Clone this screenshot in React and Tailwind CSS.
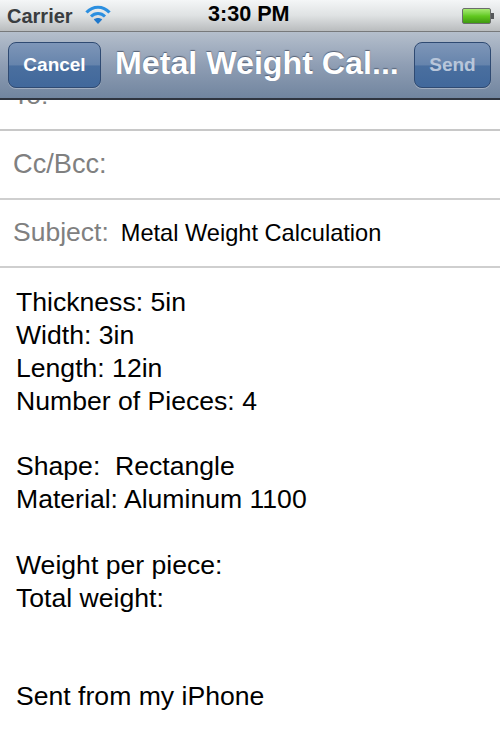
export default function App() {
  const lines1 = ["Thickness: 5in", "Width: 3in", "Length: 12in", "Number of Pieces: 4", "\u00a0", "Shape:  Rectangle", "Material: Aluminum 1100", "\u00a0", "Weight per piece:", "Total weight:", "\u00a0", "\u00a0", "Sent from my iPhone"];
  return (
    <div className="relative w-[500px] h-[750px] overflow-hidden bg-white font-['Liberation_Sans',Arial,sans-serif]">
      <div className="relative z-10">
        <div className="h-[32px] flex items-center justify-between px-[7px] bg-gradient-to-b from-[#f4f6f7] via-[#dfe2e3] to-[#b9bcbe] border-b border-[#77797b]">
          <div className="flex items-center gap-[12px] w-[140px]">
            <span className="text-[20px] font-bold text-[#3a3d40] leading-none">Carrier</span>
            <svg width="26" height="20" viewBox="0 0 26 20" className="mt-[-2px]">
              <path d="M1.5 7.5 C8 0.5 18 0.5 24.5 7.5" fill="none" stroke="#2b8fe0" strokeWidth="3.2" />
              <path d="M6 11.5 C10 7.5 16 7.5 20 11.5" fill="none" stroke="#2b8fe0" strokeWidth="3" />
              <path d="M13 19 L8.8 14.6 C11 12.6 15 12.6 17.2 14.6 Z" fill="#1f78cc" />
            </svg>
          </div>
          <span className="absolute left-[208px] top-[2px] text-[21.6px] leading-[24px] font-bold text-black">3:30 PM</span>
          <div className="flex items-center mr-[-1px]">
            <div className="w-[29px] h-[16px] rounded-[2px] border border-[#6a6d6b] bg-gradient-to-b from-[#a6ea70] via-[#62c91f] to-[#3f9a10]" />
            <div className="w-[3px] h-[6px] bg-[#55585a]" />
          </div>
        </div>
        <div className="h-[68px] relative flex items-center justify-between px-[8px] bg-gradient-to-b from-[#b5bfcc] via-[#8f9eb4] to-[#71859f] border-b-2 border-[#2f3540]">
          <button className="w-[93px] h-[46px] rounded-[8px] border border-[#2f4a72] bg-[linear-gradient(to_bottom,#7e96b8_0%,#6684ac_50%,#4a6f9f_52%,#41689b_100%)] text-white font-bold text-[19px] shadow-[0_1px_0_rgba(255,255,255,0.3)]">
            Cancel
          </button>
          <span className="absolute left-[115px] top-[11px] text-[32.2px] leading-[40px] font-bold text-white [text-shadow:0_-1px_1px_rgba(40,50,70,0.6)] whitespace-nowrap">Metal Weight Cal...</span>
          <button className="w-[77px] h-[46px] mr-[1px] rounded-[8px] border border-[#2f4a72] bg-[linear-gradient(to_bottom,#7e96b8_0%,#6684ac_50%,#4a6f9f_52%,#41689b_100%)] text-[#b8c6da] font-bold text-[19px] shadow-[0_1px_0_rgba(255,255,255,0.3)]">
            Send
          </button>
        </div>
      </div>
      <div className="mt-[-37px]">
        <div className="h-[68px] flex items-center px-[13px] border-b-2 border-[#c8c8c8] text-[26.5px] text-[#808080]">To:</div>
        <div className="h-[69px] flex items-center px-[13px] border-b-2 border-[#cfcfcf] text-[27.2px] text-[#808080]">Cc/Bcc:</div>
        <div className="h-[68px] flex items-baseline pt-[13px] px-[13px] border-b-2 border-[#cfcfcf]">
          <span className="text-[26.5px] text-[#808080]">Subject:</span>
          <span className="ml-[12px] text-[23.6px] text-black">Metal Weight Calculation</span>
        </div>
        <div className="pl-[16px] pt-[18px] text-[26.6px] leading-[32.85px] text-black whitespace-pre">
          {lines1.map((l, i) => (
            <div key={i}>{l}</div>
          ))}
        </div>
      </div>
    </div>
  );
}
